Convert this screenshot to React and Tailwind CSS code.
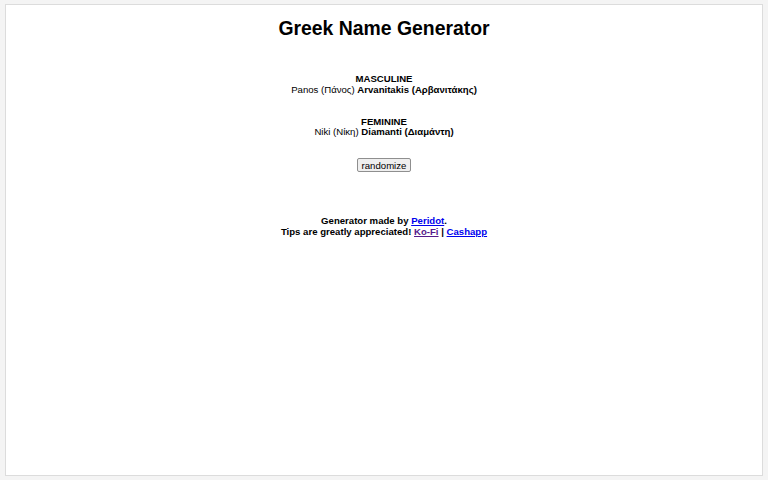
export default function App() {
  return (
    <div className="min-h-[480px] bg-[#f4f4f4] px-[5px] py-[4px]">
      <div className="h-[472px] border border-[#dcdcdc] bg-white text-center text-[9.6px] leading-[10.8px] text-black font-['Liberation_Sans',Arial,sans-serif]">
        <h1 className="pt-[12px] text-[19.4px] leading-[22px] font-bold">Greek Name Generator</h1>

        <div className="mt-[35px]">
          <div className="font-bold">MASCULINE</div>
          <div>
            Panos (Πάνος) <b>Arvanitakis (Αρβανιτάκης)</b>
          </div>
        </div>

        <div className="mt-[21px]">
          <div className="font-bold">FEMININE</div>
          <div>
            Niki (Νίκη) <b>Diamanti (Διαμάντη)</b>
          </div>
        </div>

        <div className="mt-[20px]">
          <button className="h-[14px] rounded-[2px] border border-[#8f8f8f] bg-[#efefef] px-[4px] text-[9.6px] leading-[11px]">
            randomize
          </button>
        </div>

        <div className="mt-[44px] font-bold">
          <div>
            Generator made by <a href="#" className="text-[#0000ee] underline">Peridot</a>.
          </div>
          <div>
            Tips are greatly appreciated! <a href="#" className="text-[#551a8b] underline">Ko-Fi</a> |{' '}
            <a href="#" className="text-[#0000ee] underline">Cashapp</a>
          </div>
        </div>
      </div>
    </div>
  );
}
